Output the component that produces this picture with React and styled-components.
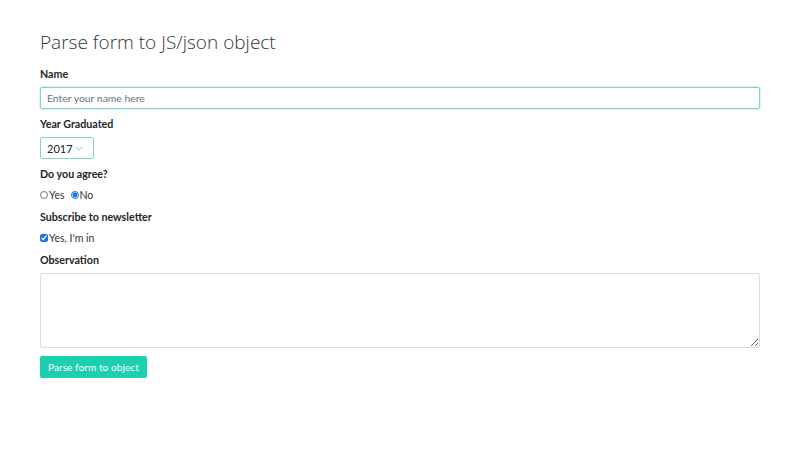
import React, { useState } from 'react';
import styled, { createGlobalStyle } from 'styled-components';

const GlobalStyle = createGlobalStyle`
  html, body {
    margin: 0;
    padding: 0;
    background: #fff;
  }
  body {
    font-family: Lato, 'Open Sans', sans-serif;
    font-size: 11px;
    color: #212529;
  }
  * {
    box-sizing: border-box;
  }
`;

export default function App() {
  const [agree, setAgree] = useState('no');
  const [subscribe, setSubscribe] = useState(true);

  return (
    <>
      <GlobalStyle />
      <Container>
        <Title>Parse form to JS/json object</Title>
        <Form onSubmit={(e) => e.preventDefault()}>
          <Group>
            <Label htmlFor='name'>Name</Label>
            <TextInput id='name' placeholder='Enter your name here' $focused />
          </Group>
          <Group>
            <Label htmlFor='year'>Year Graduated</Label>
            <SelectWrap>
              <Select id='year' defaultValue='2017'>
                <option>2015</option>
                <option>2016</option>
                <option>2017</option>
              </Select>
              <Chevron viewBox='0 0 10 6'>
                <path d='M1 1l4 4 4-4' />
              </Chevron>
            </SelectWrap>
          </Group>
          <Group>
            <Label as='p'>Do you agree?</Label>
            <Options>
              <Option>
                <Check
                  type='radio'
                  name='agree'
                  checked={agree === 'yes'}
                  onChange={() => setAgree('yes')}
                />
                Yes
              </Option>
              <Option>
                <Check
                  type='radio'
                  name='agree'
                  checked={agree === 'no'}
                  onChange={() => setAgree('no')}
                />
                No
              </Option>
            </Options>
          </Group>
          <Group>
            <Label as='p'>Subscribe to newsletter</Label>
            <Options>
              <Option>
                <Check
                  type='checkbox'
                  checked={subscribe}
                  onChange={() => setSubscribe((prev) => !prev)}
                />
                Yes, I'm in
              </Option>
            </Options>
          </Group>
          <Group>
            <Label htmlFor='obs'>Observation</Label>
            <TextArea id='obs' />
          </Group>
          <Button type='submit'>Parse form to object</Button>
        </Form>
      </Container>
    </>
  );
}

const Container = styled.div`
  width: 720px;
  margin: 0 40px;
  padding-top: 29px;
`;

const Title = styled.h1`
  margin: 0 0 12px;
  font-family: 'Open Sans', 'Noto Sans', sans-serif;
  font-weight: 300;
  font-size: 19px;
  line-height: 26px;
  color: #333;
`;

const Form = styled.form`
  display: flex;
  flex-direction: column;
  align-items: flex-start;
`;

const Group = styled.div`
  display: flex;
  flex-direction: column;
  align-items: flex-start;
  width: 100%;
  margin-bottom: 8px;
`;

const Label = styled.label`
  margin: 0 0 6px;
  font-weight: 700;
  font-size: 10.7px;
  line-height: 14px;
  color: #212529;
`;

const TextInput = styled.input`
  width: 100%;
  height: 22px;
  padding: 2px 6px;
  font-family: inherit;
  font-size: 10.4px;
  color: #495057;
  border: 1px solid ${(props) => (props.$focused ? '#80d4c8' : '#ced4da')};
  border-radius: 2px;
  box-shadow: ${(props) => (props.$focused ? '0 0 0 1px rgba(128, 212, 200, 0.25)' : 'none')};
  outline: none;

  &::placeholder {
    color: #6c757d;
  }
`;

const SelectWrap = styled.div`
  position: relative;
  width: 54px;
  height: 22px;
`;

const Select = styled.select`
  appearance: none;
  width: 100%;
  height: 100%;
  padding: 0 0 0 6px;
  font-family: inherit;
  font-size: 11px;
  color: #212529;
  background: #fff;
  border: 1px solid #80d4c8;
  border-radius: 2px;
  outline: none;
`;

const Chevron = styled.svg`
  position: absolute;
  right: 11px;
  top: 9px;
  width: 8px;
  height: 5px;
  fill: none;
  stroke: #8fb8c8;
  stroke-width: 1.2;
  pointer-events: none;
`;

const Options = styled.div`
  display: flex;
  gap: 6px;
  margin-top: 1px;
`;

const Option = styled.label`
  display: flex;
  align-items: center;
  font-size: 10.5px;
  line-height: 14px;
  color: #333;
`;

const Check = styled.input`
  width: 8px;
  height: 8px;
  margin: 0 1px 0 0;
  accent-color: #1a73e8;
`;

const TextArea = styled.textarea`
  width: 100%;
  height: 75px;
  border: 1px solid #dcdcdc;
  border-radius: 2px;
  font-family: inherit;
  font-size: 11px;
  outline: none;
`;

const Button = styled.button`
  height: 22px;
  padding: 0 8px;
  font-family: inherit;
  font-size: 10.2px;
  color: #fff;
  background: #1ccfb0;
  border: none;
  border-radius: 2px;
  cursor: pointer;
`;
